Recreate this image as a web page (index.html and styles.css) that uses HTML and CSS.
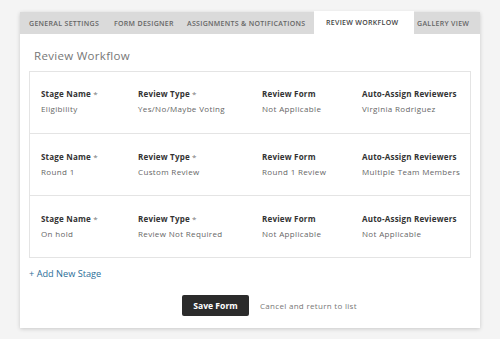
FILE: index.html
```html
<!DOCTYPE html>
<html lang="en">
<head>
  <meta charset="UTF-8">
  <title>Review Workflow</title>
  <link rel="stylesheet" href="styles.css">
</head>
<body>

<div class="panel">
  <div class="tabs">
    <div class="tab general">General Settings</div>
    <div class="tab designer">Form Designer</div>
    <div class="tab assign">Assignments &amp; Notifications</div>
    <div class="tab active">Review Workflow</div>
    <div class="tab gallery">Gallery View</div>
  </div>

  <div class="content">
    <h2>Review Workflow</h2>

    <div class="stages">
      <div class="stage">
        <div class="field name"><span class="label">Stage Name <i>*</i></span><span class="value">Eligibility</span></div>
        <div class="field type"><span class="label">Review Type <i>*</i></span><span class="value">Yes/No/Maybe Voting</span></div>
        <div class="field form"><span class="label">Review Form</span><span class="value">Not Applicable</span></div>
        <div class="field reviewers"><span class="label">Auto-Assign Reviewers</span><span class="value">Virginia Rodriguez</span></div>
      </div>
      <div class="stage">
        <div class="field name"><span class="label">Stage Name <i>*</i></span><span class="value">Round 1</span></div>
        <div class="field type"><span class="label">Review Type <i>*</i></span><span class="value">Custom Review</span></div>
        <div class="field form"><span class="label">Review Form</span><span class="value">Round 1 Review</span></div>
        <div class="field reviewers"><span class="label">Auto-Assign Reviewers</span><span class="value">Multiple Team Members</span></div>
      </div>
      <div class="stage">
        <div class="field name"><span class="label">Stage Name <i>*</i></span><span class="value">On hold</span></div>
        <div class="field type"><span class="label">Review Type <i>*</i></span><span class="value">Review Not Required</span></div>
        <div class="field form"><span class="label">Review Form</span><span class="value">Not Applicable</span></div>
        <div class="field reviewers"><span class="label">Auto-Assign Reviewers</span><span class="value">Not Applicable</span></div>
      </div>
    </div>

    <a class="add-stage" href="#">+ Add New Stage</a>

    <div class="actions">
      <button class="save">Save Form</button>
      <a class="cancel" href="#">Cancel and return to list</a>
    </div>
  </div>
</div>

</body>
</html>
```

FILE: styles.css
```css
* { box-sizing: border-box; }
body {
  margin: 0;
  padding: 12px 20px;
  background: #f4f4f4;
  font-family: "Open Sans", sans-serif;
}
.panel {
  width: 460px;
  background: #fff;
  box-shadow: 0 1px 4px rgba(0, 0, 0, 0.18);
}
.tabs {
  display: flex;
  height: 22px;
  background: #dadada;
}
.tab {
  display: flex;
  align-items: center;
  flex-shrink: 0;
  overflow: hidden;
  font-size: 7px;
  font-weight: 600;
  letter-spacing: 0.3px;
  text-transform: uppercase;
  color: #666;
  white-space: nowrap;
}
.tab.general { width: 87px; padding-left: 9px; }
.tab.designer { width: 74px; padding-left: 7px; }
.tab.assign { width: 133px; padding-left: 6px; }
.tab.active {
  width: 100px;
  padding-left: 12px;
  margin-top: -1px;
  height: 23px;
  background: #fff;
  color: #444;
}
.tab.gallery { width: 66px; padding-left: 3px; }
.content {
  padding: 0 9px 12px;
}
h2 {
  margin: 0;
  padding: 14px 0 0 5px;
  font-size: 11.5px;
  font-weight: 400;
  line-height: 16px;
  letter-spacing: 0.3px;
  color: #777;
}
.stages {
  margin-top: 7px;
  border: 1px solid #e4e4e4;
}
.stage {
  display: flex;
  height: 62px;
  padding: 17px 11px 0;
  border-top: 1px solid #e4e4e4;
}
.stage:first-child {
  border-top: none;
  height: 61px;
  padding-top: 16px;
}
.field {
  display: flex;
  flex-direction: column;
  flex-shrink: 0;
  white-space: nowrap;
}
.field.name { width: 97px; }
.field.type { width: 124px; }
.field.form { width: 100px; }
.field.reviewers { flex: 1; }
.label {
  font-size: 8px;
  font-weight: 700;
  line-height: 12px;
  color: #333;
  letter-spacing: 0.2px;
}
.label i {
  font-style: normal;
  font-weight: 400;
  color: #777;
}
.value {
  margin-top: 3px;
  font-size: 8px;
  line-height: 12px;
  color: #666;
  letter-spacing: 0.35px;
}
.add-stage {
  display: block;
  margin-top: 9px;
  font-size: 9.2px;
  line-height: 14px;
  color: #2c6e98;
  text-decoration: none;
}
.actions {
  display: flex;
  align-items: center;
  margin-top: 14px;
  padding-left: 153px;
}
.save {
  width: 67px;
  height: 21px;
  padding: 0;
  border: none;
  border-radius: 2px;
  background: #2b2b2b;
  color: #fff;
  font-family: "Open Sans", sans-serif;
  font-size: 8.6px;
  font-weight: 700;
  cursor: pointer;
}
.cancel {
  margin-left: 11px;
  font-size: 8px;
  color: #777;
  letter-spacing: 0.3px;
  text-decoration: none;
}
```
